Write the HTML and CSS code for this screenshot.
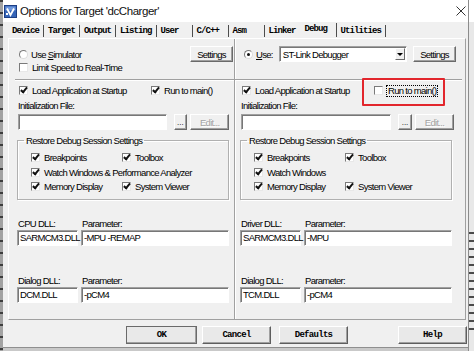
FILE: index.html
```html
<!DOCTYPE html>
<html lang="en">

<head>
    <meta charset="UTF-8">
    <title>Options for Target 'dcCharger'</title>
    <link rel="stylesheet" href="styles.css">
</head>

<body>
    <div class="screen">
        <div class="edge-l"></div>
        <div class="win">
            <!-- title bar -->
            <div class="titlebar">
                <svg class="appicon" width="13" height="13" viewBox="0 0 13 13">
                    <rect x="0.5" y="0.5" width="12" height="12" fill="#3565b8" stroke="#1d3f85" />
                    <rect x="1.5" y="1.5" width="10" height="4" fill="#6f98dc" />
                    <path d="M3 3.5 L6.5 10 L10 3.5" fill="none" stroke="#fff" stroke-width="1.8" />
                    <rect x="2" y="8" width="2" height="2" fill="#fff" />
                </svg>
                <span class="title">Options for Target 'dcCharger'</span>
                <svg class="close" width="10" height="10" viewBox="0 0 10 10">
                    <path d="M0.5 0.5 L9.5 9.5 M9.5 0.5 L0.5 9.5" stroke="#333" stroke-width="1" />
                </svg>
            </div>

            <!-- tabs -->
            <div class="tabs">
                <span class="tab">Device</span>
                <span class="tab">Target</span>
                <span class="tab">Output</span>
                <span class="tab">Listing</span>
                <span class="tab">User</span>
                <span class="tab">C/C++</span>
                <span class="tab">Asm</span>
                <span class="tab tab-pre">Linker</span>
                <span class="tab tab-on">Debug</span>
                <span class="tab">Utilities</span>
            </div>

            <div class="panel">
                <!-- simulator side -->
                <div class="half half-left">
                    <div class="row row-use">
                        <label class="opt"><span class="radio"></span><span>Use <u>S</u>imulator</span></label>
                        <span class="btn btn-set">Settings</span>
                    </div>
                    <div class="row row-limit">
                        <label class="opt"><span class="chk"></span>Limit Speed to Real-Time</label>
                    </div>
                    <div class="sep"></div>
                    <div class="row row-load">
                        <label class="opt"><span class="chk on"></span>Load Application at Startup</label>
                        <label class="opt opt-run"><span class="chk on"></span>Run to main()</label>
                    </div>
                    <div class="lbl lbl-init">Initialization File:</div>
                    <div class="row row-init">
                        <span class="field field-init"></span>
                        <span class="btn btn-dots">...</span>
                        <span class="btn btn-edit">Edit...</span>
                    </div>
                    <fieldset class="group">
                        <legend>Restore Debug Session Settings</legend>
                        <div class="group-grid">
                            <label class="opt"><span class="chk on"></span>Breakpoints</label>
                            <label class="opt"><span class="chk on"></span>Toolbox</label>
                            <label class="opt wide"><span class="chk on"></span>Watch Windows &amp; Performance Analyzer</label>
                            <label class="opt"><span class="chk on"></span>Memory Display</label>
                            <label class="opt"><span class="chk on"></span>System Viewer</label>
                        </div>
                    </fieldset>
                    <div class="dll">
                        <div class="dll-labels"><span class="dll-name">CPU DLL:</span><span>Parameter:</span></div>
                        <div class="dll-fields">
                            <span class="field field-dll">SARMCM3.DLL</span>
                            <span class="field field-par">-MPU -REMAP</span>
                        </div>
                    </div>
                    <div class="dll dll-dialog">
                        <div class="dll-labels"><span class="dll-name">Dialog DLL:</span><span>Parameter:</span></div>
                        <div class="dll-fields">
                            <span class="field field-dll">DCM.DLL</span>
                            <span class="field field-par">-pCM4</span>
                        </div>
                    </div>
                </div>

                <!-- debugger side -->
                <div class="half half-right">
                    <div class="row row-use">
                        <label class="opt"><span class="radio on"></span><span><u>U</u>se:</span></label>
                        <span class="combo">ST-Link Debugger<span class="combo-btn"></span></span>
                        <span class="btn btn-set">Settings</span>
                    </div>
                    <div class="row row-limit"></div>
                    <div class="sep"></div>
                    <div class="row row-load">
                        <label class="opt"><span class="chk on"></span>Load Application at Startup</label>
                        <label class="opt opt-run mark"><span class="chk"></span><span class="focus">Run to main()</span></label>
                    </div>
                    <div class="lbl lbl-init">Initialization File:</div>
                    <div class="row row-init">
                        <span class="field field-init"></span>
                        <span class="btn btn-dots">...</span>
                        <span class="btn btn-edit">Edit...</span>
                    </div>
                    <fieldset class="group">
                        <legend>Restore Debug Session Settings</legend>
                        <div class="group-grid">
                            <label class="opt"><span class="chk on"></span>Breakpoints</label>
                            <label class="opt"><span class="chk on"></span>Toolbox</label>
                            <label class="opt wide"><span class="chk on"></span>Watch Windows</label>
                            <label class="opt"><span class="chk on"></span>Memory Display</label>
                            <label class="opt"><span class="chk on"></span>System Viewer</label>
                        </div>
                    </fieldset>
                    <div class="dll">
                        <div class="dll-labels"><span class="dll-name">Driver DLL:</span><span>Parameter:</span></div>
                        <div class="dll-fields">
                            <span class="field field-dll">SARMCM3.DLL</span>
                            <span class="field field-par">-MPU</span>
                        </div>
                    </div>
                    <div class="dll dll-dialog">
                        <div class="dll-labels"><span class="dll-name">Dialog DLL:</span><span>Parameter:</span></div>
                        <div class="dll-fields">
                            <span class="field field-dll">TCM.DLL</span>
                            <span class="field field-par">-pCM4</span>
                        </div>
                    </div>
                </div>
            </div>

            <div class="buttons">
                <span class="btn btn-big btn-ok">OK</span>
                <span class="btn btn-big btn-cancel">Cancel</span>
                <span class="btn btn-big btn-def">Defaults</span>
                <span class="btn btn-big btn-help">Help</span>
            </div>
        </div>
        <div class="edge-r"></div>
    </div>
</body>

</html>
```

FILE: styles.css
```css
* {
    margin: 0;
    padding: 0;
    box-sizing: border-box;
}

body {
    width: 474px;
    height: 351px;
    overflow: hidden;
    background: #c9c9c9;
    font-family: "Liberation Sans", Arial, sans-serif;
    font-size: 9.5px;
    letter-spacing: -0.7px;
    line-height: 11px;
    color: #000;
}

.screen {
    display: flex;
    height: 351px;
}

.edge-l {
    width: 3px;
    background: repeating-linear-gradient(to bottom, #3e3e3e 0 2px, #a2a2a2 2px 12px);
}

.edge-r {
    width: 6px;
    border-left: 1px solid #8c8c8c;
    background:
        repeating-linear-gradient(to bottom, transparent 0 6px, #4a4a4a 6px 8px) 0 226px / 100% 104px no-repeat,
        linear-gradient(#fff 0 22px, #e8e8e8 22px);
}

.win {
    flex: 1;
    display: flex;
    flex-direction: column;
    background: #f0f0f0;
    height: 348px;
    border-bottom: 1px solid #8f8f8f;
}

/* title bar */
.titlebar {
    height: 22px;
    background: #fff;
    display: flex;
    align-items: center;
    padding-left: 1px;
}

.appicon {
    margin-right: 3px;
}

.title {
    font-size: 11.5px;
    letter-spacing: -0.45px;
    color: #111;
}

.close {
    margin-left: auto;
    margin-right: 2px;
}

/* tabs */
.tabs {
    height: 16px;
    display: flex;
    padding-left: 5px;
    font-family: "Liberation Mono", monospace;
    font-weight: bold;
    font-size: 9px;
    letter-spacing: -0.9px;
}

.tab {
    min-width: 36px;
    height: 12px;
    margin-top: 3px;
    padding: 0 4px;
    line-height: 12px;
    border-right: 1px solid #4c4c4c;
}

.tab-pre {
    border-right-color: transparent;
}

.tab-on {
    margin-top: 1px;
    height: 14px;
}

/* main panel */
.panel {
    height: 282px;
    margin: 0 2px 0 5px;
    display: flex;
    border: 1px solid;
    border-color: #fff #a0a0a0 #a0a0a0 #fff;
}

.half {
    position: relative;
    display: flex;
    flex-direction: column;
}

.half-left {
    width: 225px;
    padding: 0 5px 0 9px;
}

.half-right {
    flex: 1;
    padding: 0 10px 0 6px;
    border-left: 1px solid #a0a0a0;
    box-shadow: inset 1px 0 #fff;
}

.row {
    display: flex;
    align-items: center;
}

.row-use {
    margin-top: 7px;
    height: 16px;
}

.row-limit {
    height: 11px;
}

.sep {
    margin-top: 6px;
    height: 2px;
    border-top: 1px solid #a0a0a0;
    border-bottom: 1px solid #fff;
}

.half-left .sep {
    margin-left: -3px;
    margin-right: -5px;
}

.half-right .sep {
    margin-left: -6px;
    margin-right: -7px;
}

.row-load {
    position: relative;
    margin-top: 4px;
    height: 11px;
}

.opt {
    display: flex;
    align-items: center;
    height: 11px;
    white-space: nowrap;
}

.row .opt:first-child {
    margin-left: 1px;
}

.half-right .row-use .opt:first-child {
    margin-left: 3px;
}

.row-load .opt-run {
    position: absolute;
    left: 0;
    margin-left: 133px;
}

.lbl-init {
    margin-top: 4px;
    height: 11px;
}

.row-init {
    margin-top: 3px;
    height: 16px;
}

/* checkbox and radio */
.chk {
    position: relative;
    width: 9px;
    height: 9px;
    margin-right: 4px;
    background: #fff;
    border: 1px solid;
    border-color: #7a7a7a #e8e8e8 #e8e8e8 #7a7a7a;
    flex: none;
}

.chk.on::after {
    content: "";
    position: absolute;
    left: 2px;
    top: -1px;
    width: 2px;
    height: 5px;
    border: solid #111;
    border-width: 0 2px 2px 0;
    transform: rotate(40deg);
}

.radio {
    position: relative;
    width: 9px;
    height: 9px;
    margin-right: 3px;
    border-radius: 50%;
    background: #fff;
    border: 1px solid;
    border-color: #7a7a7a #dcdcdc #dcdcdc #7a7a7a;
    flex: none;
}

.radio.on::after {
    content: "";
    position: absolute;
    left: 2px;
    top: 2px;
    width: 3px;
    height: 3px;
    border-radius: 50%;
    background: #111;
}

/* fields and buttons */
.field {
    display: block;
    height: 16px;
    background: #fff;
    border: 1px solid;
    border-color: #a0a0a0 #fff #fff #a0a0a0;
    box-shadow: inset 1px 1px #777;
    padding-left: 3px;
    line-height: 14px;
    white-space: nowrap;
}

.field-init {
    width: 150px;
}

.btn {
    display: flex;
    align-items: center;
    justify-content: center;
    height: 16px;
    background: #f0f0f0;
    border: 1px solid;
    border-color: #fff #6a6a6a #6a6a6a #fff;
    box-shadow: inset -1px -1px #a0a0a0;
    white-space: nowrap;
}

.btn-set {
    width: 43px;
    margin-left: auto;
}

.half-left .btn-set {
    margin-right: -4px;
}

.half-right .btn-set {
    margin-right: -1px;
}

.btn-dots {
    width: 14px;
    margin-left: 7px;
    letter-spacing: 0;
    font-size: 8px;
}

.btn-edit {
    width: 39px;
    margin-left: 3px;
    color: #a3a3a3;
    text-shadow: 1px 1px #fff;
}

.combo {
    display: flex;
    align-items: center;
    width: 128px;
    height: 16px;
    margin-left: 6px;
    padding-left: 3px;
    background: #fff;
    border: 1px solid;
    border-color: #a0a0a0 #fff #fff #a0a0a0;
    box-shadow: inset 1px 1px #777;
}

.combo-btn {
    position: relative;
    margin-left: auto;
    margin-right: 1px;
    width: 10px;
    height: 12px;
    background: #f0f0f0;
    border: 1px solid;
    border-color: #fff #6a6a6a #6a6a6a #fff;
}

.combo-btn::after {
    content: "";
    position: absolute;
    left: 1px;
    top: 4px;
    border-left: 3px solid transparent;
    border-right: 3px solid transparent;
    border-top: 3px solid #000;
}

/* group box */
.group {
    margin-top: 5px;
    margin-left: -1px;
    width: 212px;
    height: 65px;
    border: 1px solid #b0b0b0;
    box-shadow: inset 1px 1px #fff, 1px 1px #fff;
    padding: 0 0 0 13px;
}

.group legend {
    margin-left: -7px;
    padding: 0 2px;
    line-height: 11px;
}

.group-grid {
    display: grid;
    grid-template-columns: 91px auto;
    row-gap: 3.5px;
    padding-top: 6px;
}

.group-grid .wide {
    grid-column: span 2;
}

/* dll rows */
.dll-labels {
    display: flex;
    margin-top: 18px;
    height: 11px;
}

.dll-name {
    width: 64px;
}

.dll-fields {
    display: flex;
    margin-top: 1px;
    margin-left: -1px;
}

.field-dll {
    width: 61px;
    padding-left: 2px;
}

.field-par {
    width: 148px;
    margin-left: 3px;
    padding-left: 2px;
}

.dll-dialog .dll-labels {
    margin-top: 29px;
}

/* the highlighted checkbox */
.focus {
    outline: 1px dotted #000;
    padding: 0 1px;
    line-height: 10px;
}

.mark::before {
    content: "";
    position: absolute;
    left: -12px;
    top: -7px;
    width: 79px;
    height: 24px;
    border: 2px solid #e2262c;
    border-radius: 1px;
}

/* bottom buttons */
.buttons {
    display: flex;
    height: 18px;
    margin-top: 6px;
    padding-left: 123px;
    font-family: "Liberation Mono", monospace;
    font-weight: bold;
    font-size: 9px;
    letter-spacing: -0.7px;
}

.btn-big {
    height: 18px;
    width: 69px;
    background: #e9e9e9;
    border-color: #fff #5e5e5e #5e5e5e #fff;
}

.btn-ok {
    width: 71px;
    border-color: #6a6a6a;
}

.btn-cancel {
    margin-left: 5px;
}

.btn-def {
    margin-left: 8px;
}

.btn-help {
    margin-left: 50px;
}
```
